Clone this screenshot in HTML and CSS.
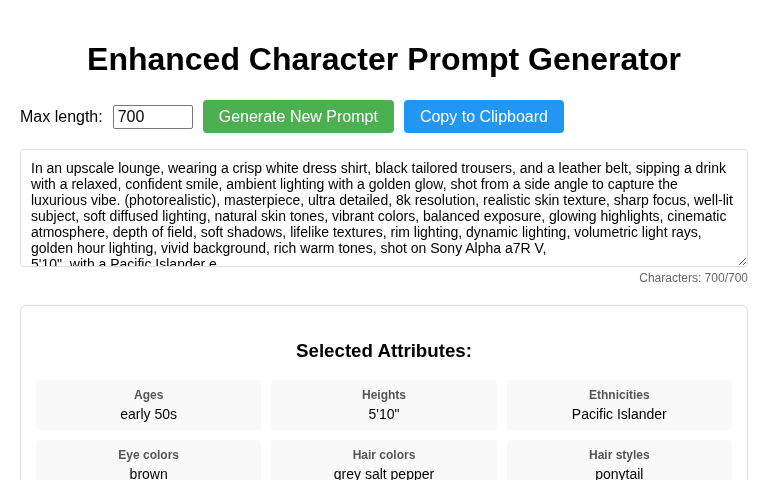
FILE: index.html
```html
<!DOCTYPE html>
<html lang="en">
<head>
<meta charset="utf-8">
<title>Enhanced Character Prompt Generator</title>
<link rel="stylesheet" href="styles.css">
</head>
<body>
<div class="container">
  <h1 class="title">Enhanced Character Prompt Generator</h1>
  <div class="controls">
    <label class="len-label" for="maxlen">Max length:</label>
    <input class="len-input" id="maxlen" type="text" value="700">
    <button class="btn btn-green">Generate New Prompt</button>
    <button class="btn btn-blue">Copy to Clipboard</button>
  </div>
  <textarea class="prompt">In an upscale lounge, wearing a crisp white dress shirt, black tailored trousers, and a leather belt, sipping a drink with a relaxed, confident smile, ambient lighting with a golden glow, shot from a side angle to capture the luxurious vibe. (photorealistic), masterpiece, ultra detailed, 8k resolution, realistic skin texture, sharp focus, well-lit subject, soft diffused lighting, natural skin tones, vibrant colors, balanced exposure, glowing highlights, cinematic atmosphere, depth of field, soft shadows, lifelike textures, rim lighting, dynamic lighting, volumetric light rays, golden hour lighting, vivid background, rich warm tones, shot on Sony Alpha a7R V,
5'10", with a Pacific Islander e</textarea>
  <div class="counter">Characters: 700/700</div>
  <section class="card">
    <h3 class="card-title">Selected Attributes:</h3>
    <div class="attr-grid">
      <div class="attr"><div class="attr-label">Ages</div><div class="attr-value">early 50s</div></div>
      <div class="attr"><div class="attr-label">Heights</div><div class="attr-value">5'10"</div></div>
      <div class="attr"><div class="attr-label">Ethnicities</div><div class="attr-value">Pacific Islander</div></div>
      <div class="attr"><div class="attr-label">Eye colors</div><div class="attr-value">brown</div></div>
      <div class="attr"><div class="attr-label">Hair colors</div><div class="attr-value">grey salt pepper</div></div>
      <div class="attr"><div class="attr-label">Hair styles</div><div class="attr-value">ponytail</div></div>
    </div>
  </section>
</div>
</body>
</html>
```
FILE: styles.css
```css
html, body {
  margin: 0;
  padding: 0;
  background: #ffffff;
}
body {
  font-family: "Liberation Sans", Arial, sans-serif;
  color: #000;
  padding: 20px;
}
.container {
  max-width: 728px;
  margin: 0 auto;
}
.title {
  font-size: 32px;
  font-weight: bold;
  text-align: center;
  margin: 21px 0 22px;
  line-height: 37px;
}
.controls {
  display: flex;
  align-items: center;
  gap: 10px;
  height: 33px;
  margin-bottom: 16px;
}
.len-label {
  font-size: 16px;
}
.len-input {
  width: 80px;
  height: 24px;
  box-sizing: border-box;
  font-family: "Liberation Sans", Arial, sans-serif;
  font-size: 16px;
  padding: 1px 4px;
  border: 1px solid #767676;
  border-radius: 2px;
  color: #000;
}
.btn {
  height: 33px;
  padding: 0 16px;
  border: none;
  border-radius: 4px;
  color: #fff;
  font-family: "Liberation Sans", Arial, sans-serif;
  font-size: 16px;
  cursor: pointer;
}
.btn-green { background: #4caf50; }
.btn-blue { background: #2196f3; }
.prompt {
  display: block;
  width: 100%;
  height: 118px;
  box-sizing: border-box;
  padding: 10px;
  border: 1px solid #ddd;
  border-radius: 4px;
  font-family: "Liberation Sans", Arial, sans-serif;
  font-size: 14px;
  line-height: 16px;
  color: #000;
  resize: vertical;
  scrollbar-width: none;
  margin: 0;
}
.counter {
  text-align: right;
  font-size: 12px;
  line-height: 14px;
  color: #666;
  margin-top: 4px;
  margin-bottom: 20px;
}
.card {
  border: 1px solid #ddd;
  border-radius: 6px;
  padding: 0 15px 15px;
}
.card-title {
  font-size: 18.72px;
  font-weight: bold;
  text-align: center;
  line-height: 22px;
  margin: 34px 0 18px;
}
.attr-grid {
  display: grid;
  grid-template-columns: repeat(3, 1fr);
  gap: 10px;
}
.attr {
  background: #f9f9f9;
  border-radius: 4px;
  padding: 8px;
  text-align: center;
}
.attr-label {
  font-size: 12px;
  font-weight: bold;
  color: #555;
  line-height: 14px;
  margin-bottom: 4px;
}
.attr-value {
  font-size: 14px;
  line-height: 16px;
}
```
